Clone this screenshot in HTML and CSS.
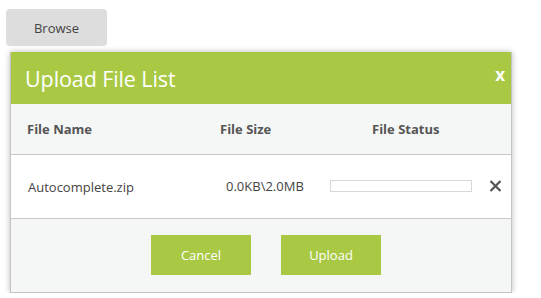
FILE: index.html
```html
<!DOCTYPE html>
<html>
<head>
<meta charset="utf-8">
<link rel="stylesheet" href="styles.css">
</head>
<body>
<div class="page">
  <button class="browse">Browse</button>
  <div class="dialog">
    <div class="dlg-header">
      <span class="title">Upload File List</span>
      <span class="close">x</span>
    </div>
    <div class="thead">
      <span>File Name</span>
      <span>File Size</span>
      <span>File Status</span>
    </div>
    <div class="trow">
      <span class="fname">Autocomplete.zip</span>
      <span class="fsize">0.0KB\2.0MB</span>
      <span class="bar"></span>
      <svg class="remove" width="13" height="12" viewBox="0 0 13 12"><path d="M1.5 1 L11.5 11 M11.5 1 L1.5 11" stroke="#555" stroke-width="2.2" fill="none"/></svg>
    </div>
    <div class="footer">
      <button class="btn">Cancel</button>
      <button class="btn">Upload</button>
    </div>
  </div>
</div>
</body>
</html>
```
FILE: styles.css
```css
html, body {
  margin: 0;
  padding: 0;
  background: #fff;
}
.page {
  padding: 9px 0 0 6px;
  font-family: "Open Sans", "Noto Sans", sans-serif;
}
.browse {
  display: block;
  width: 101px;
  height: 37px;
  border: none;
  border-radius: 4px;
  background: #dddddd;
  color: #444;
  font-family: inherit;
  font-size: 13px;
  padding: 0;
}
.dialog {
  margin: 6px 0 0 4px;
  width: 500px;
  border: 1px solid #c4c4c4;
  border-top: none;
  box-shadow: 0 0 6px rgba(0,0,0,0.28);
  background: #f5f7f6;
}
.dlg-header {
  height: 52px;
  background: #a9c944;
  display: flex;
  align-items: center;
  justify-content: space-between;
  padding: 0 6px 0 14px;
  color: #fff;
}
.title {
  font-size: 21.5px;
  letter-spacing: -0.1px;
  margin-top: 1px;
}
.close {
  font-size: 17px;
  font-weight: 700;
  margin-top: -7px;
  line-height: 1;
}
.thead {
  height: 49px;
  display: grid;
  grid-template-columns: 193px 152px 1fr;
  align-items: center;
  padding-left: 16px;
  font-size: 13px;
  font-weight: 700;
  color: #555;
  border-bottom: 1px solid #c8c8c8;
  padding-bottom: 1px;
}
.trow {
  height: 63px;
  background: #fff;
  display: grid;
  grid-template-columns: 198px 104px 142px 1fr;
  align-items: center;
  padding-left: 17px;
  font-size: 13px;
  color: #444;
  border-bottom: 1px solid #c8c8c8;
}
.fsize {
  margin-top: -2px;
}
.bar {
  height: 10px;
  border: 1px solid #d8d8d8;
  background: #fff;
  margin-top: -1px;
}
.remove {
  margin-left: 17px;
  margin-top: -1px;
}
.footer {
  display: flex;
  justify-content: center;
  gap: 30px;
  padding: 16px 0 17px 10px;
}
.btn {
  width: 100px;
  height: 40px;
  border: none;
  background: #a9c944;
  color: #fff;
  font-family: inherit;
  font-size: 13px;
  padding: 0;
}
```
